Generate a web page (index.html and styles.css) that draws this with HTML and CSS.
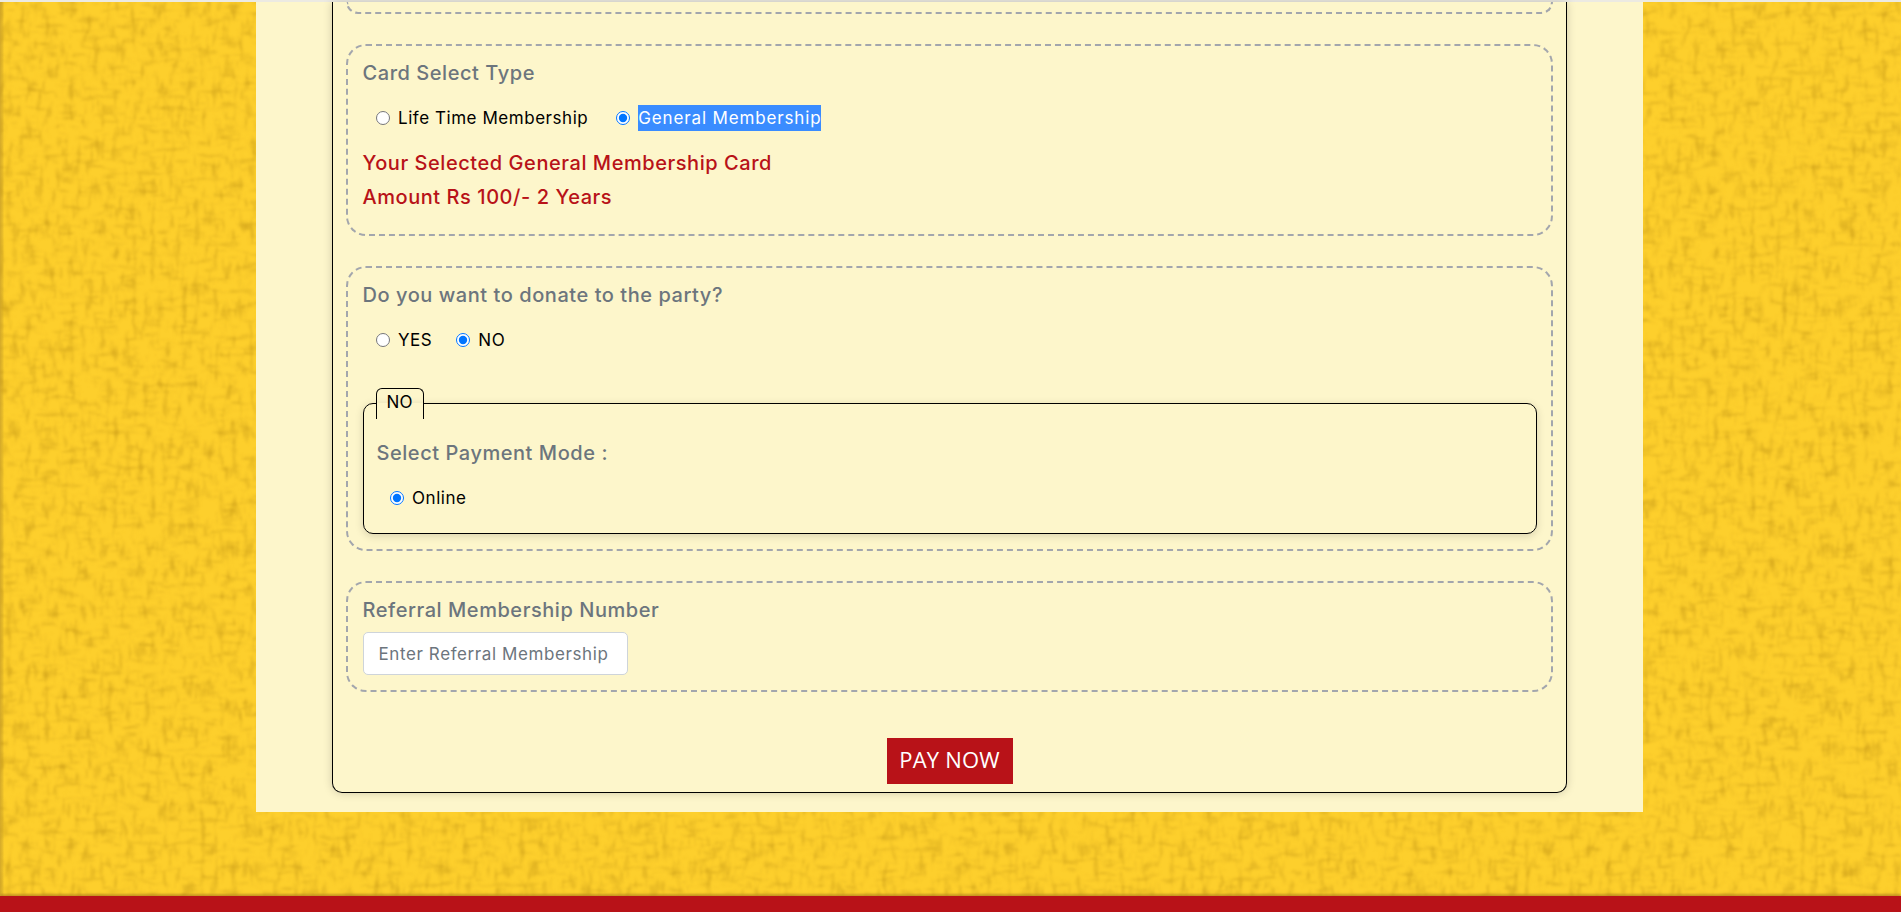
FILE: index.html
```html
<!DOCTYPE html>
<html lang="en">
<head>
<meta charset="utf-8">
<title>Membership</title>
<link rel="stylesheet" href="styles.css">
</head>
<body>
<svg class="texture" width="1901" height="912" aria-hidden="true">
  <filter id="paper" x="0" y="0" width="100%" height="100%" color-interpolation-filters="sRGB">
    <feTurbulence type="fractalNoise" baseFrequency="0.16 0.05" numOctaves="3" seed="11" result="vert"/>
    <feColorMatrix in="vert" type="matrix" values="0 0 0 0 0.68  0 0 0 0 0.5  0 0 0 0 0.05  0.95 0 0 0 -0.49" result="vdark"/>
    <feTurbulence type="fractalNoise" baseFrequency="0.05 0.17" numOctaves="3" seed="4" result="horz"/>
    <feColorMatrix in="horz" type="matrix" values="0 0 0 0 0.68  0 0 0 0 0.5  0 0 0 0 0.05  0.85 0 0 0 -0.45" result="hdark"/>
    <feMerge result="both"><feMergeNode in="vdark"/><feMergeNode in="hdark"/></feMerge>
    <feGaussianBlur in="both" stdDeviation="1.3"/>
  </filter>
  <rect width="1901" height="912" filter="url(#paper)"/>
</svg>
<div class="topline"></div>
<main class="sheet">
  <form class="card">
    <div class="box box-cut"></div>
    <section class="box box-type">
      <h2 class="title">Card Select Type</h2>
      <div class="radios">
        <label class="radio"><input type="radio" name="card"><span>Life Time Membership</span></label>
        <label class="radio"><input type="radio" name="card" checked><span class="picked">General Membership</span></label>
      </div>
      <p class="note note-first">Your Selected General Membership Card</p>
      <p class="note">Amount Rs 100/- 2 Years</p>
    </section>
    <section class="box box-donate">
      <h2 class="title">Do you want to donate to the party?</h2>
      <div class="radios radios-tight">
        <label class="radio"><input type="radio" name="donate"><span>YES</span></label>
        <label class="radio"><input type="radio" name="donate" checked><span>NO</span></label>
      </div>
      <fieldset class="panel">
        <legend class="tab">NO</legend>
        <h3 class="title">Select Payment Mode :</h3>
        <div class="radios">
          <label class="radio"><input type="radio" name="mode" checked><span>Online</span></label>
        </div>
      </fieldset>
    </section>
    <section class="box box-ref">
      <h2 class="title">Referral Membership Number</h2>
      <input class="field" type="text" placeholder="Enter Referral Membership">
    </section>
    <div class="actions"><button class="pay" type="button">PAY NOW</button></div>
  </form>
</main>
<footer class="foot"></footer>
</body>
</html>
```
FILE: styles.css
```css
* { box-sizing: border-box; }
html, body { margin: 0; height: 912px; overflow: hidden; }
body {
  position: relative;
  display: flex;
  flex-direction: column;
  background: linear-gradient(90deg, #d4aa2a 0, #ecc02b 3px, #fdcf2c 4px);
  font-family: "Inter", "Noto Sans", sans-serif;
  color: #000;
}
.texture { position: absolute; left: 0; top: 0; z-index: 0; }
.topline { position: relative; height: 2px; background: #eceae2; flex: none; }
.sheet {
  position: relative;
  width: 1387px;
  height: 810px;
  margin-left: 256px;
  padding: 0 76px 19px 76px;
  background: #fdf6cb;
  flex: none;
}
.card {
  height: 100%;
  padding: 0 13px;
  border: 1px solid #000;
  border-top: 0;
  border-radius: 0 0 10px 10px;
  box-shadow: 0 0 10px rgba(0, 0, 0, .18);
}
.box {
  border: 2px dashed #a3a6ad;
  border-radius: 20px;
  padding: 14px 14.5px;
  margin-bottom: 30px;
}
.box-cut { height: 12px; padding: 0; border-top: 0; border-radius: 0 0 20px 20px; }
.box-type { height: 192px; }
.box-donate { height: 285px; }
.box-ref { height: 111px; margin-bottom: 0; }
.title {
  margin: 0;
  font-size: 20px;
  line-height: 27px;
  font-weight: 500;
  color: #6c757d;
  letter-spacing: .55px;
}
.radios { display: flex; gap: 27.5px; margin-top: 18px; padding-left: 13px; }
.radios-tight { gap: 23.5px; }
.radio { display: flex; align-items: center; height: 26px; gap: 8px; font-size: 17px; letter-spacing: .55px; }
.radio input { width: 14.5px; height: 14.5px; margin: 0; flex: none; }
.picked { background: #3a8cff; color: #fff; line-height: 26px; letter-spacing: .85px; }
.note { margin: 0; font-size: 20px; line-height: 34px; font-weight: 500; color: #b81218; letter-spacing: .55px; }
.note-first { margin-top: 15px; }
.panel {
  margin: 35px 0 0;
  padding: 21px 13px 0;
  height: 146px;
  min-width: 0;
  border: 1px solid #000;
  border-radius: 10px;
  box-shadow: 0 2px 8px rgba(0, 0, 0, .15);
}
.panel .radios { margin-top: 18px; }
.tab {
  height: 31px;
  margin-left: -1px;
  padding: 0 10px;
  border: 1px solid #000;
  border-bottom: 0;
  border-radius: 6px 6px 0 0;
  font-size: 17px;
  line-height: 26px;
  letter-spacing: .2px;
}
.field {
  display: block;
  width: 265px;
  height: 43px;
  margin-top: 8px;
  padding: 0 15px;
  border: 1px solid #ced4da;
  border-radius: 5px;
  background: #fff;
  font: inherit;
  font-size: 17px;
  letter-spacing: .6px;
}
.field::placeholder { color: #6c757d; opacity: 1; }
.actions { display: flex; justify-content: center; margin-top: 46px; }
.pay {
  width: 126px;
  height: 46px;
  padding: 0 0 4px;
  border: 0;
  background: #b81218;
  color: #fff;
  font-family: "Open Sans", sans-serif;
  font-size: 22px;
  letter-spacing: .2px;
}
.foot {
  position: relative;
  margin-top: 84px;
  height: 16px;
  background: #b81218;
  box-shadow: 0 -2px 2px rgba(180, 130, 30, .7);
  flex: none;
}
```
